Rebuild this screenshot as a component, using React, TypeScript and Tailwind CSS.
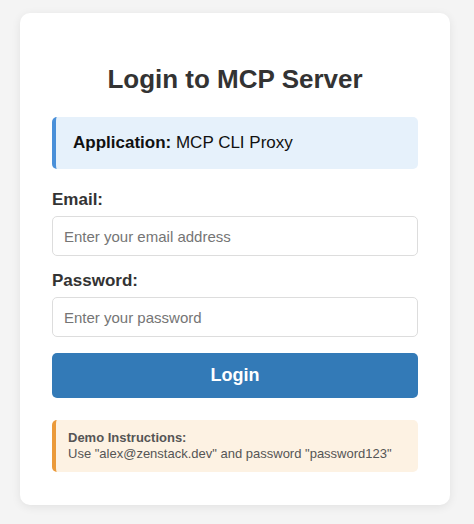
export default function App() {
  return (
    <div
      className="min-h-[524px] w-full bg-[#f4f4f4] pt-[13px] pb-[19px]"
      style={{ fontFamily: '"Liberation Sans", Arial, sans-serif' }}
    >
      <div className="ml-[20px] w-[430px] rounded-[10px] bg-white px-[32px] pt-[52px] pb-[33px] shadow-[0_2px_10px_rgba(0,0,0,0.08)]">
        <h1 className="text-center text-[26px] font-bold leading-[29px] text-[#333333]">
          Login to MCP Server
        </h1>
        <div className="mt-[23px] flex h-[52px] items-center rounded-[5px] border-l-4 border-[#4a90d9] bg-[#e6f1fb] pl-[17px] text-[17px] leading-[20px] text-[#111]">
          <span className="font-bold">Application:</span>
          <span>&nbsp;MCP CLI Proxy</span>
        </div>
        <label className="mt-[21px] block text-[17px] font-bold leading-[20px] text-[#333]">
          Email:
        </label>
        <input
          type="email"
          placeholder="Enter your email address"
          className="mt-[6px] block h-[40px] w-full rounded-[5px] border border-[#dddddd] px-[11px] text-[15px] text-[#333] outline-none placeholder:text-[#757575]"
        />
        <label className="mt-[15px] block text-[17px] font-bold leading-[20px] text-[#333]">
          Password:
        </label>
        <input
          type="password"
          placeholder="Enter your password"
          className="mt-[6px] block h-[40px] w-full rounded-[5px] border border-[#dddddd] px-[11px] text-[15px] text-[#333] outline-none placeholder:text-[#757575]"
        />
        <button className="mt-[16px] block h-[45px] w-full rounded-[5px] bg-[#337ab7] text-[18px] font-bold text-white">
          Login
        </button>
        <div className="mt-[22px] flex h-[52px] flex-col justify-center rounded-[5px] border-l-4 border-[#eb9a3a] bg-[#fdf2e3] pl-[12px] text-[13px] leading-[16px] text-[#555]">
          <span className="font-bold">Demo Instructions:</span>
          <span>Use "alex@zenstack.dev" and password "password123"</span>
        </div>
      </div>
    </div>
  );
}
